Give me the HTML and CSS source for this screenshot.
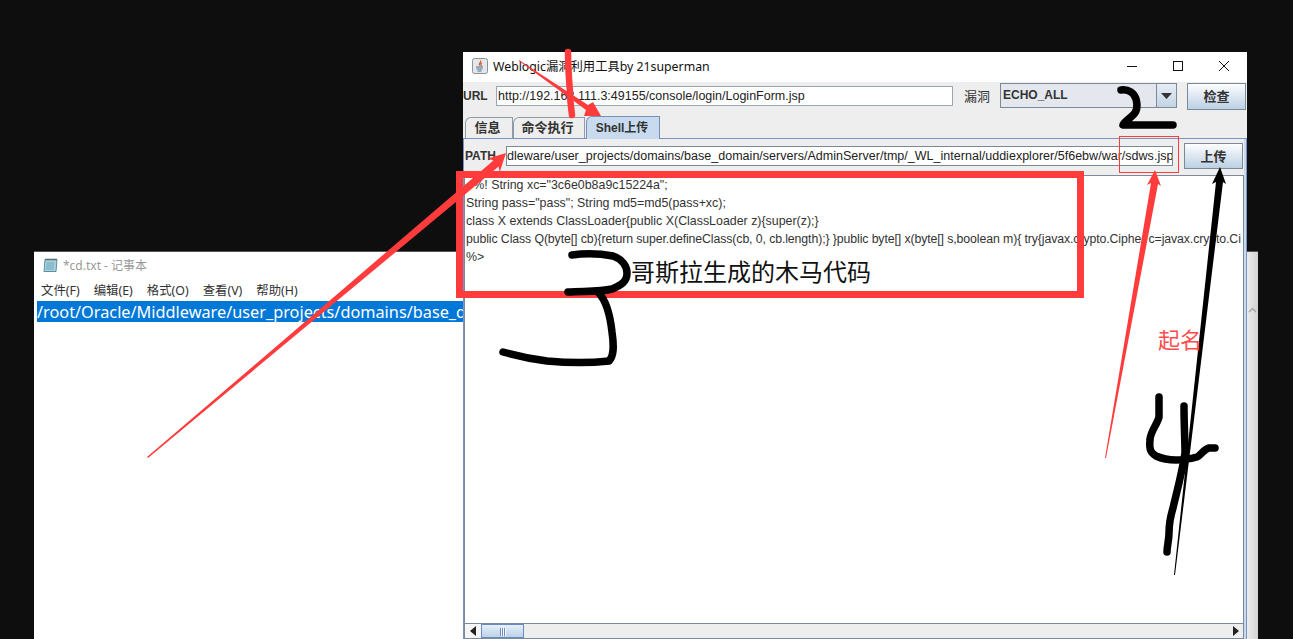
FILE: index.html
```html
<!DOCTYPE html>
<html lang="zh">
<head>
<meta charset="utf-8">
<title>Weblogic</title>
<link rel="stylesheet" href="styles.css">
</head>
<body>
<div class="desktop">
  <section class="notepad">
    <div class="np-main">
      <header class="np-title">
        <svg class="np-icon" width="16" height="16" viewBox="0 0 16 16"><path d="M2 2.500h12l-1 12H1z" fill="#a9d3de" stroke="#5f8fa0"/><path d="M3 1.500v2M5 1.500v2M7 1.500v2M9 1.500v2M11 1.500v2M13 1.500v2" stroke="#555" stroke-width="1"/><path d="M3.500 6h8M3.300 8h8M3 10h8M2.800 12h8" stroke="#6fa6b8"/></svg>
        <span>*cd.txt - 记事本</span>
      </header>
      <nav class="np-menu"><span>文件(F)</span><span>编辑(E)</span><span>格式(O)</span><span>查看(V)</span><span>帮助(H)</span></nav>
      <div class="np-text"><span class="np-sel">/root/Oracle/Middleware/user_projects/domains/base_d</span></div>
    </div>
    <div class="np-strip"><svg class="np-chev" width="11" height="10" viewBox="0 0 11 10"><path d="M2 7l3.500-3.500L9 7" fill="none" stroke="#a8a8a8" stroke-width="1.500"/></svg></div>
  </section>

  <section class="java">
    <header class="j-title">
      <svg class="j-icon" width="16" height="16" viewBox="0 0 16 16"><rect x=".5" y=".5" width="15" height="15" rx="2" fill="#e4e8ec" stroke="#8a949c"/><path d="M8.500 2.500c1.500 2-2.500 3-1 5M10 5c-1.500 1-1.500 2-.5 3" fill="none" stroke="#d8541e" stroke-width="1.200"/><path d="M4 9h7M4.500 11h6M5.500 13h4" stroke="#4a6f8c" stroke-width="1"/></svg>
      <span class="j-name">Weblogic漏洞利用工具by 21superman</span>
      <div class="j-controls">
        <svg width="12" height="12" viewBox="0 0 12 12"><path d="M1 6.500h10" stroke="#111"/></svg>
        <svg width="12" height="12" viewBox="0 0 12 12"><rect x="1.500" y="1.500" width="9" height="9" fill="none" stroke="#111"/></svg>
        <svg width="12" height="12" viewBox="0 0 12 12"><path d="M1 1l10 10M11 1L1 11" stroke="#111" fill="none"/></svg>
      </div>
    </header>
    <div class="j-content">
      <div class="url-row">
        <label class="lbl lbl-url">URL</label>
        <div class="field url-field">http://192.168.111.3:49155/console/login/LoginForm.jsp</div>
        <label class="lbl lbl-vuln">漏洞</label>
        <div class="combo">
          <span class="combo-val">ECHO_ALL</span>
          <span class="combo-btn"><svg width="12" height="6" viewBox="0 0 12 6"><path d="M0 0h11L5.500 6z" fill="#333"/></svg></span>
        </div>
        <button class="btn btn-check">检查</button>
      </div>
      <div class="tabs">
        <span class="tab tab-info">信息</span>
        <span class="tab tab-cmd">命令执行</span>
        <span class="tab tab-on">Shell上传</span>
      </div>
      <div class="pane">
        <div class="path-row">
          <label class="lbl lbl-path">PATH</label>
          <div class="field path-field"><span>dleware/user_projects/domains/base_domain/servers/AdminServer/tmp/_WL_internal/uddiexplorer/5f6ebw/war/sdws.jsp</span></div>
          <button class="btn btn-up">上传</button>
        </div>
        <div class="editor">
          <div class="code">
            <div>&lt;%! String xc="3c6e0b8a9c15224a";</div>
            <div>String pass="pass"; String md5=md5(pass+xc);</div>
            <div>class X extends ClassLoader{public X(ClassLoader z){super(z);}</div>
            <div class="code-long">public Class Q(byte[] cb){return super.defineClass(cb, 0, cb.length);} }public byte[] x(byte[] s,boolean m){ try{javax.crypto.Cipher c=javax.crypto.Ci</div>
            <div>%&gt;</div>
          </div>
          <div class="hbar">
            <span class="arrow arrow-l"><svg width="6" height="10" viewBox="0 0 6 10"><path d="M6 0v10L0 5z" fill="#222"/></svg></span>
            <span class="thumb"><i></i><i></i><i></i></span>
            <span class="track"></span>
            <span class="arrow"><svg width="6" height="10" viewBox="0 0 6 10"><path d="M0 0v10l6-5z" fill="#222"/></svg></span>
          </div>
        </div>
      </div>
    </div>
  </section>

  <svg class="marks" width="1293" height="639" viewBox="0 0 1293 639">
    <g fill="#ff3b3b">
      <path d="M147 457L493.400 160.400 488 158.400 506 153 499.600 172.200 498.600 166.500 148 458z"/>
      <path d="M519 60L588 105 593 102 601 116 584 116 586 110 519 61z"/>
      <path d="M1105 458L1151 183 1147 185 1155 170 1161 186 1158 184 1106 458z"/>
    </g>
    <path d="M568 52c0 15 1 28 2 40 0 8 1 15 2 23" fill="none" stroke="#ff3b3b" stroke-width="6.500" stroke-linecap="round"/>
    <rect x="459.500" y="174.500" width="621" height="120" fill="none" stroke="#ff3b3b" stroke-width="7"/>
    <rect x="1119.500" y="136.500" width="59" height="36" fill="none" stroke="#ff3b3b"/>
    <path d="M1174 575L1216 182 1212 184 1220 167 1226 184 1223 182 1175 575z" fill="#000"/>
    <g fill="none" stroke="#000" stroke-width="7.500" stroke-linecap="round" stroke-linejoin="round">
      <path d="M1121 90c8-1 13 3 15 9 2 7 1 13-4 17-4 4-8 6-9 9h50"/>
      <path d="M572 255c15-2 30-1 41 1 9 3 14 10 14 17 0 9-6 12-15 16-12 3-28 2-44 3"/>
      <path d="M598 292c8 8 12 22 14 40 2 14 2 24-3 29-18 2-40 2-62 0-16-2-30-5-44-9"/>
      <path d="M1159 397L1159 417C1157 425 1150 432 1150 440C1149 450 1151 453 1156 456C1167 461 1182 461 1197 457C1201 455 1204 449 1209 448L1215 448"/>
      <path d="M1184 406C1184 424 1185 441 1185 453C1182 473 1177 491 1173 508C1170 518 1169 526 1169 533C1169 540 1167 546 1167 552"/>
    </g>
  </svg>
  <span class="note note-code">哥斯拉生成的木马代码</span>
  <span class="note note-name">起名</span>
</div>
</body>
</html>
```
FILE: styles.css
```css
* { box-sizing: border-box; }
html, body { margin: 0; height: 100%; overflow: hidden; background: #0e0e0e; }
.desktop { position: relative; width: 1293px; height: 639px; overflow: hidden; font-family: "Liberation Sans", "Noto Sans CJK SC", sans-serif; }

.notepad { position: absolute; left: 34px; top: 251px; width: 1224px; height: 388px; background: #fff; display: flex; border-top: 1px solid #555; }
.np-main { flex: 1; min-width: 0; display: flex; flex-direction: column; }
.np-title { height: 27px; display: flex; align-items: center; padding: 0 0 2px 9px; gap: 4px; font: 12px "Noto Sans", "Noto Sans CJK SC", sans-serif; color: #999; }
.np-icon { flex: none; }
.np-menu { height: 22px; display: flex; gap: 14px; padding-left: 7px; align-items: center; font: 12.400px "Noto Sans", "Noto Sans CJK SC", sans-serif; color: #333; }
.np-text { flex: 1; padding-left: 3px; white-space: nowrap; overflow: hidden; font: 16.300px/21px "Noto Sans", "Noto Sans CJK SC", sans-serif; }
.np-sel { background: #0078d7; color: #fff; display: block; width: 426px; height: 21px; padding-top: 1px; line-height: 20px; }
.np-strip { width: 11px; flex: none; padding-top: 53px; background: linear-gradient(90deg, #ececec, #d2d2d2); }
.np-chev { display: block; }

.java { position: absolute; left: 463px; top: 52px; width: 784px; height: 587px; background: #eee; display: flex; flex-direction: column; }
.j-title { height: 30px; background: #fff; display: flex; align-items: center; padding: 0 0 3px 9px; flex: none; }
.j-icon { flex: none; margin-right: 5px; }
.j-name { font: 12.300px "Noto Sans", "Noto Sans CJK SC", sans-serif; color: #111; }
.j-controls { margin-left: auto; display: flex; gap: 34px; padding-right: 17px; }
.j-content { flex: 1; display: flex; flex-direction: column; min-height: 0; }

.url-row { display: flex; align-items: flex-start; height: 35px; padding-top: 1px; }
.lbl { font-size: 12px; font-weight: 700; color: #333; white-space: nowrap; }
.lbl-url { width: 33px; margin-top: 6px; }
.lbl-vuln { margin: 3px 10px 0 11px; font-weight: 400; font-size: 13px; }
.field { background: #fff; border: 1px solid #7a8a99; font-size: 12.500px; color: #222; white-space: nowrap; overflow: hidden; }
.url-field { width: 457px; height: 20px; margin-top: 3px; padding: 2px 0 0 1px; border-color: #9aa7b3; }
.combo { width: 177px; height: 25px; display: flex; border: 1px solid #7a8a99; background: #e4e8ee; }
.combo-val { flex: 1; font-size: 12px; font-weight: 700; color: #333; padding: 4px 0 0 2px; border-right: 1px solid #7a8a99; }
.combo-btn { width: 19px; display: flex; align-items: center; justify-content: center; background: linear-gradient(#e6edf4, #c4d4e4); }
.btn { border: 1px solid #7a8a99; background: linear-gradient(#fdfeff, #bcd0e4); font: 700 13px "Liberation Sans", "Noto Sans CJK SC", sans-serif; color: #333; padding: 0 0 2px; }
.btn-check { width: 59px; height: 27px; margin-left: 10px; }

.tabs { display: flex; height: 21px; padding-left: 2px; flex: none; font-size: 13px; font-weight: 700; color: #333; align-items: flex-end; }
.tab { height: 21px; border: 1px solid #8f9ba8; border-bottom: 0; border-radius: 6px 0 0 0; display: flex; align-items: center; justify-content: center; padding: 0 3px 3px 0; }
.tab-info { width: 48px; }
.tab-cmd { width: 72px; margin-right: 1px; }
.tab-on { width: 74px; height: 23px; margin-bottom: -1px; background: #c8daee; border-color: #7a8fb8; font-size: 12px; padding-right: 2px; position: relative; z-index: 1; }

.pane { flex: 1; min-height: 0; border: 1px solid #7a93c4; border-bottom: 0; box-shadow: inset -2px 0 0 #c8daee; display: flex; flex-direction: column; }
.path-row { display: flex; align-items: flex-start; height: 36px; padding-top: 4px; flex: none; }
.lbl-path { width: 41px; margin: 6px 0 0 1px; }
.path-field { width: 667px; height: 20px; margin-top: 3px; display: flex; justify-content: flex-start; padding: 2px 0 0 0; }
.path-field span { flex: 1; border-right: 1px solid #333; height: 15px; line-height: 14px; letter-spacing: .02px; }
.btn-up { width: 59px; height: 26px; margin-left: 11px; }

.editor { flex: 1; min-height: 0; width: 780px; display: flex; flex-direction: column; background: #fff; border: 1px solid #7a8a99; }
.code { flex: 1; min-height: 0; padding: 0 0 0 1px; overflow: hidden; font-size: 12.400px; line-height: 18px; color: #333; white-space: nowrap; }
.code-long { font-size: 12.300px; letter-spacing: -0.1px; }
.hbar { height: 15px; flex: none; display: flex; background: #eee; border-top: 1px solid #7a8a99; }
.arrow { width: 15px; flex: none; display: flex; align-items: center; justify-content: center; background: #eee; }
.arrow-l { width: 16px; background: #f6f6f6; }
.thumb { width: 43px; flex: none; border: 1px solid #6a8ac0; background: linear-gradient(#e6f0fa, #bcd2e8); display: flex; justify-content: center; padding-top: 3px; }
.thumb i { width: 1px; height: 8px; background: #6a8ac0; box-shadow: 1px 0 0 #fff; margin-right: 1px; }
.track { flex: 1; }

.marks { position: absolute; left: 0; top: 0; pointer-events: none; }
.note { position: absolute; white-space: nowrap; font-family: "Noto Sans CJK SC", sans-serif; }
.note-code { left: 631px; top: 253px; font-size: 24px; line-height: 36px; color: #111; }
.note-name { left: 1158px; top: 322px; font-size: 22px; line-height: 32px; color: #ff4d4d; }
```
